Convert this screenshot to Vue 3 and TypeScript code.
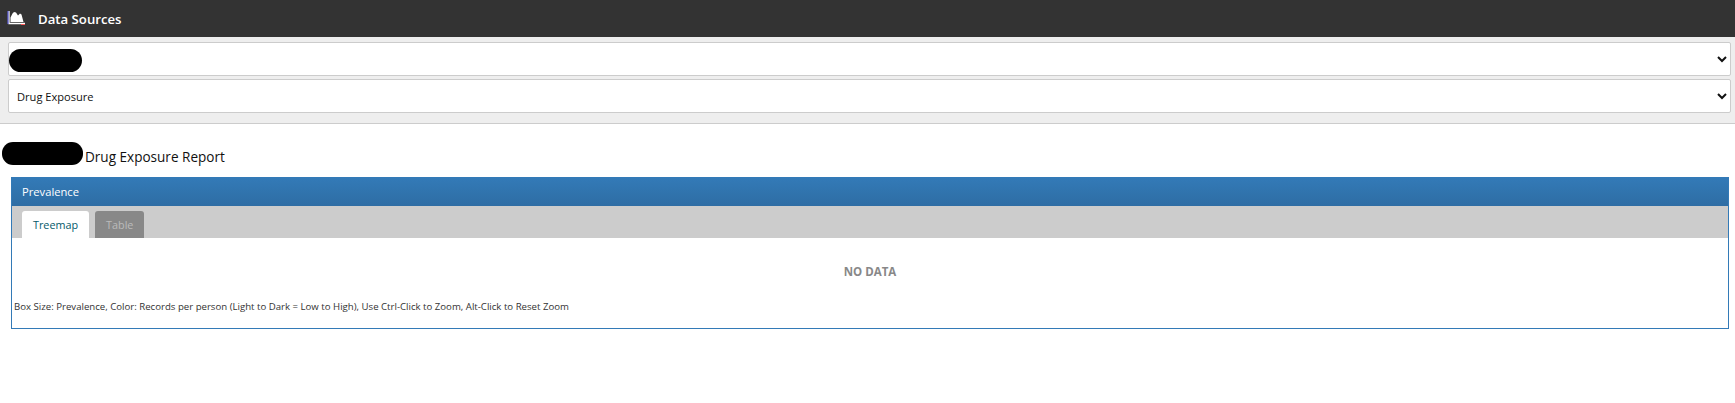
<script setup lang="ts">
const tabs: { label: string; active: boolean }[] = [
  { label: 'Treemap', active: true },
  { label: 'Table', active: false },
]
</script>

<template>
  <div class="page">
    <header class="topbar">
      <svg class="logo" width="18" height="14" viewBox="0 0 18 14">
        <path d="M2 0v12.500h16" fill="none" stroke="#fff" stroke-width="1.300" />
        <path d="M1 0v13" stroke="#6a6aff" stroke-width="1" />
        <path d="M3.500 11V6.500L5.500 2.500 7 1l2 .5 2 3 2-2 1.500 1L16.500 11z" fill="#fff" />
        <path d="M14 13.500h4" stroke="#ff5a5a" stroke-width="1" />
      </svg>
      <span class="brand">Data Sources</span>
    </header>

    <section class="filters">
      <div class="select-wrap">
        <select class="picker"><option></option></select>
        <span class="redact"></span>
      </div>
      <select class="picker"><option>Drug Exposure</option></select>
    </section>

    <h1 class="title">
      <span class="redact-b"></span>
      <span>Drug Exposure Report</span>
    </h1>

    <section class="panel">
      <div class="panel-head">Prevalence</div>
      <div class="tabs">
        <div v-for="t in tabs" :key="t.label" class="tab" :class="{ active: t.active }">{{ t.label }}</div>
      </div>
      <div class="panel-body">
        <div class="nodata">NO DATA</div>
        <div class="caption">Box Size: Prevalence, Color: Records per person (Light to Dark = Low to High), Use Ctrl-Click to Zoom, Alt-Click to Reset Zoom</div>
      </div>
    </section>
  </div>
</template>

<style>
html, body { margin: 0; background: #fff; }
</style>

<style scoped>
.page {
  font-family: "Open Sans", "Noto Sans", sans-serif;
  color: #000;
  height: 403px;
  overflow: hidden;
}
.topbar {
  height: 37px;
  background: #333;
  display: flex;
  align-items: center;
  padding-left: 7px;
  box-sizing: border-box;
}
.logo { margin: -1px 13px 0 0; }
.brand {
  color: #fff;
  font-size: 13.200px;
  font-weight: 600;
}
.filters {
  background: #eee;
  height: 87px;
  box-sizing: border-box;
  border-bottom: 1px solid #ccc;
  padding: 5px 4px 0 8px;
  display: flex;
  flex-direction: column;
  gap: 3px;
}
.select-wrap { position: relative; height: 34px; }
.picker {
  display: block;
  width: 100%;
  height: 34px;
  box-sizing: border-box;
  border: 1px solid #ccc;
  border-radius: 2px;
  background: #fff;
  padding: 0 4px;
  font-family: inherit;
  font-size: 11.100px;
  color: #111;
}
.redact {
  position: absolute;
  left: 1px;
  top: 7px;
  width: 73px;
  height: 23px;
  background: #000;
  border-radius: 12px;
}
.title {
  margin: 22px 0 0;
  height: 22px;
  display: flex;
  align-items: center;
  font-size: 13.550px;
  font-weight: 500;
  line-height: 22px;
  color: #111;
  padding-left: 2px;
}
.redact-b {
  display: block;
  align-self: flex-start;
  width: 81px;
  height: 23px;
  margin: -4px 2px 0 0;
  background: #000;
  border-radius: 11px;
}
.panel {
  margin: 9px 6px 0 11px;
  border: 1px solid #337ab7;
  height: 152px;
  box-sizing: border-box;
}
.panel-head {
  height: 28px;
  background: linear-gradient(#337ab7, #2e6da4);
  color: #fff;
  font-size: 11.200px;
  line-height: 28px;
  padding-left: 10px;
}
.tabs {
  height: 32px;
  box-sizing: border-box;
  background: #ccc;
  padding: 5px 0 0 10px;
  display: flex;
  gap: 6px;
}
.tab {
  height: 27px;
  line-height: 27px;
  border-radius: 3px 3px 0 0;
  background: #888;
  color: #bbb;
  font-size: 10.800px;
  padding: 0 11px;
}
.tab.active {
  background: #fff;
  color: #055a6b;
}
.nodata {
  margin-top: 26px;
  text-align: center;
  font-size: 11.500px;
  font-weight: 700;
  line-height: 16px;
  color: #888;
}
.caption {
  margin-top: 20px;
  padding-left: 2px;
  font-size: 9.630px;
  line-height: 14px;
  color: #333;
}
</style>
